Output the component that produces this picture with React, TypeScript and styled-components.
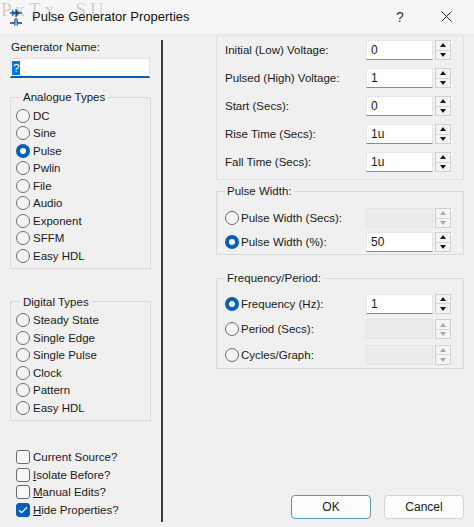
import React from 'react';
import styled, { createGlobalStyle, css } from 'styled-components';

const FONT = `"Liberation Sans", Arial, sans-serif`;
const ACCENT = '#005fb8';

const ANALOGUE = ['DC', 'Sine', 'Pulse', 'Pwlin', 'File', 'Audio', 'Exponent', 'SFFM', 'Easy HDL'];
const DIGITAL = ['Steady State', 'Single Edge', 'Single Pulse', 'Clock', 'Pattern', 'Easy HDL'];

const TIMING = [
  { label: 'Initial (Low) Voltage:', value: '0' },
  { label: 'Pulsed (High) Voltage:', value: '1' },
  { label: 'Start (Secs):', value: '0' },
  { label: 'Rise Time (Secs):', value: '1u' },
  { label: 'Fall Time (Secs):', value: '1u' },
];

const PULSE_WIDTH = [
  { label: 'Pulse Width (Secs):', value: '', checked: false },
  { label: 'Pulse Width (%):', value: '50', checked: true },
];

const FREQUENCY = [
  { label: 'Frequency (Hz):', value: '1', checked: true },
  { label: 'Period (Secs):', value: '', checked: false },
  { label: 'Cycles/Graph:', value: '', checked: false },
];

const AppIcon = () => (
  <svg width="14" height="18" viewBox="0 0 14 18">
    {/* diode on top */}
    <path d="M1 5h12" stroke="#1f3f6e" strokeWidth="1.4" />
    <path d="M3 1.5l4 3.5-4 3.5z" fill="#2a6cb8" />
    <path d="M7 1.5l4 3.5-4 3.5z" fill="#1f3f6e" />
    <path d="M7 1v8" stroke="#1f3f6e" strokeWidth="1.2" />
    {/* capacitor below */}
    <path d="M7 10v2M1 15h4M9 15h4" stroke="#1f3f6e" strokeWidth="1.4" />
    <rect x="5" y="11.5" width="1.6" height="6" fill="#2a6cb8" />
    <rect x="7.4" y="11.5" width="1.6" height="6" fill="#2a6cb8" />
  </svg>
);

const CloseGlyph = () => (
  <svg width="11" height="11" viewBox="0 0 11 11">
    <path d="M0.5 0.5l10 10M10.5 0.5l-10 10" stroke="#222" strokeWidth="1" />
  </svg>
);

const Spinner = ({ disabled }: { disabled?: boolean }) => (
  <SpinBox>
    <SpinHalf>
      <Arrow $up $disabled={disabled} />
    </SpinHalf>
    <SpinHalf $bottom>
      <Arrow $disabled={disabled} />
    </SpinHalf>
  </SpinBox>
);

const NumberField = ({ value, disabled }: { value: string; disabled?: boolean }) => (
  <FieldWrap>
    <TextBox $disabled={disabled}>{value}</TextBox>
    <Spinner disabled={disabled} />
  </FieldWrap>
);

const Radio = ({ checked }: { checked?: boolean }) => <RadioDot $checked={checked} />;

const App = (): React.JSX.Element => {
  return (
    <>
      <GlobalStyle />
      <Window>
        <Watermark>PкTx  SU</Watermark>
        <TitleBar>
          <AppIcon />
          <Title>Pulse Generator Properties</Title>
          <TitleButtons>
            <CaptionButton>?</CaptionButton>
            <CaptionButton>
              <CloseGlyph />
            </CaptionButton>
          </TitleButtons>
        </TitleBar>

        <Body>
          <LeftPane>
            <NameLabel>Generator Name:</NameLabel>
            <NameInput>
              <Selection>?</Selection>
            </NameInput>

            <GroupBox $top={12}>
              <Legend>Analogue Types</Legend>
              {ANALOGUE.map((name) => (
                <OptionRow key={name}>
                  <Radio checked={name === 'Pulse'} />
                  <span>{name}</span>
                </OptionRow>
              ))}
            </GroupBox>

            <GroupBox $top={26}>
              <Legend>Digital Types</Legend>
              {DIGITAL.map((name) => (
                <OptionRow key={name}>
                  <Radio />
                  <span>{name}</span>
                </OptionRow>
              ))}
            </GroupBox>

            <CheckList>
              <OptionRow>
                <CheckBox />
                <span>Current Source?</span>
              </OptionRow>
              <OptionRow>
                <CheckBox />
                <span>
                  <u>I</u>solate Before?
                </span>
              </OptionRow>
              <OptionRow>
                <CheckBox />
                <span>
                  <u>M</u>anual Edits?
                </span>
              </OptionRow>
              <OptionRow>
                <CheckBox $checked>
                  <svg width="10" height="8" viewBox="0 0 10 8">
                    <path d="M1 4.2l2.6 2.4L9 1.2" stroke="#fff" strokeWidth="1.3" fill="none" />
                  </svg>
                </CheckBox>
                <span>
                  <u>H</u>ide Properties?
                </span>
              </OptionRow>
            </CheckList>
          </LeftPane>

          <Divider />

          <RightPane>
            <Panel>
              {TIMING.map((row) => (
                <FieldRow key={row.label} $height={28}>
                  <FieldLabel $width={141}>{row.label}</FieldLabel>
                  <NumberField value={row.value} />
                </FieldRow>
              ))}
            </Panel>

            <RightGroup $top={4} $padTop={8} $padBottom={0}>
              <Legend>Pulse Width:</Legend>
              {PULSE_WIDTH.map((row) => (
                <FieldRow key={row.label} $height={24}>
                  <Radio checked={row.checked} />
                  <FieldLabel $width={127} $indent={2}>
                    {row.label}
                  </FieldLabel>
                  <NumberField value={row.value} disabled={!row.checked} />
                </FieldRow>
              ))}
            </RightGroup>

            <RightGroup $top={16} $padTop={6} $padBottom={0}>
              <Legend>Frequency/Period:</Legend>
              {FREQUENCY.map((row) => (
                <FieldRow key={row.label} $height={25.5}>
                  <Radio checked={row.checked} />
                  <FieldLabel $width={127} $indent={2}>
                    {row.label}
                  </FieldLabel>
                  <NumberField value={row.value} disabled={!row.checked} />
                </FieldRow>
              ))}
            </RightGroup>

            <ButtonRow>
              <DialogButton $default>OK</DialogButton>
              <DialogButton>Cancel</DialogButton>
            </ButtonRow>
          </RightPane>
        </Body>
      </Window>
    </>
  );
};

const GlobalStyle = createGlobalStyle`
  html, body {
    margin: 0;
    padding: 0;
    background: #f0f0f0;
  }
  #root {
    width: 474px;
    height: 527px;
  }
`;

const Window = styled.div`
  position: relative;
  width: 474px;
  height: 527px;
  display: flex;
  flex-direction: column;
  background: #f0f0f0;
  font-family: ${FONT};
  font-size: 11.5px;
  color: #1a1a1a;
  overflow: hidden;
`;

const Watermark = styled.div`
  position: absolute;
  top: 0;
  left: 1px;
  font-family: "Liberation Serif", serif;
  font-size: 19px;
  line-height: 19px;
  letter-spacing: 4px;
  white-space: pre;
  color: rgba(140, 140, 140, 0.4);
  pointer-events: none;
`;

const TitleBar = styled.div`
  height: 33px;
  flex-shrink: 0;
  display: flex;
  align-items: center;
  padding-left: 9px;
  background: #f7f7f7;
`;

const Title = styled.span`
  margin-left: 9px;
  font-size: 13px;
  color: #111;
`;

const TitleButtons = styled.div`
  margin-left: auto;
  display: flex;
  padding-right: 5px;
`;

const CaptionButton = styled.div`
  width: 46px;
  height: 33px;
  display: flex;
  align-items: center;
  justify-content: center;
  font-size: 14px;
  color: #333;
`;

const Body = styled.div`
  flex: 1;
  display: flex;
`;

const LeftPane = styled.div`
  width: 141px;
  padding-left: 10px;
  display: flex;
  flex-direction: column;
`;

const NameLabel = styled.div`
  margin-top: 7px;
  line-height: 14px;
  padding-left: 1px;
`;

const NameInput = styled.div`
  margin-top: 4px;
  width: 140px;
  height: 20px;
  box-sizing: border-box;
  background: #fff;
  border: 1px solid #e3e3e3;
  border-bottom: 2px solid ${ACCENT};
  display: flex;
  align-items: center;
  padding-left: 1px;
`;

const Selection = styled.span`
  background: #0078d7;
  color: #fff;
  line-height: 14px;
  padding: 0 1px;
`;

const GroupBox = styled.fieldset<{ $top: number }>`
  margin: ${(p) => p.$top}px 0 0;
  padding: 3px 0 3px 5px;
  border: 1px solid #dadada;
  min-width: 0;
`;

const Legend = styled.legend`
  padding: 0 2px;
  margin-left: 5px;
  line-height: 14px;
`;

const OptionRow = styled.div`
  height: 17.5px;
  display: flex;
  align-items: center;
  gap: 3px;
  white-space: nowrap;
`;

const RadioDot = styled.span<{ $checked?: boolean }>`
  width: 14px;
  height: 14px;
  box-sizing: border-box;
  border-radius: 50%;
  flex-shrink: 0;
  ${(p) =>
    p.$checked
      ? css`
          background: #fff;
          border: 4px solid ${ACCENT};
        `
      : css`
          background: #f5f5f5;
          border: 1px solid #6b6b6b;
        `}
`;

const CheckList = styled.div`
  margin-top: 28px;
  padding-left: 6px;
`;

const CheckBox = styled.span<{ $checked?: boolean }>`
  width: 14px;
  height: 14px;
  box-sizing: border-box;
  border-radius: 3px;
  flex-shrink: 0;
  display: flex;
  align-items: center;
  justify-content: center;
  background: ${(p) => (p.$checked ? ACCENT : '#f7f7f7')};
  border: 1px solid ${(p) => (p.$checked ? ACCENT : '#6b6b6b')};
`;

const Divider = styled.div`
  width: 2px;
  margin: 7px 0 5px 10px;
  background: #3d3d3d;
`;

const RightPane = styled.div`
  flex: 1;
  display: flex;
  flex-direction: column;
  padding: 0 10px 0 53px;
`;

const Panel = styled.div`
  margin-top: 2px;
  padding: 0 0 3px 8px;
  border: 1px solid #e2e2e2;
`;

const RightGroup = styled.fieldset<{ $top: number; $padTop: number; $padBottom: number }>`
  margin: ${(p) => p.$top}px 0 0;
  padding: ${(p) => p.$padTop}px 0 ${(p) => p.$padBottom}px 8px;
  border: 1px solid #dadada;
  min-width: 0;

  legend {
    margin-left: 0;
  }
`;

const FieldRow = styled.div<{ $height: number }>`
  height: ${(p) => p.$height}px;
  display: flex;
  align-items: center;
`;

const FieldLabel = styled.span<{ $width: number; $indent?: number }>`
  width: ${(p) => p.$width}px;
  padding-left: ${(p) => p.$indent ?? 0}px;
  box-sizing: border-box;
  white-space: nowrap;
  flex-shrink: 0;
`;

const FieldWrap = styled.div`
  display: flex;
  align-items: center;
  gap: 2px;
`;

const TextBox = styled.div<{ $disabled?: boolean }>`
  width: 67px;
  height: 20px;
  box-sizing: border-box;
  padding-left: 4px;
  display: flex;
  align-items: center;
  font-size: 12px;
  ${(p) =>
    p.$disabled
      ? css`
          background: #ececec;
          border: 1px solid #e4e4e4;
        `
      : css`
          background: #fff;
          border: 1px solid #e6e6e6;
          border-bottom-color: #8a8a8a;
        `}
`;

const SpinBox = styled.div`
  width: 16px;
  height: 20px;
  box-sizing: border-box;
  border: 1px solid #cfcfcf;
  background: #f4f4f4;
  display: flex;
  flex-direction: column;
`;

const SpinHalf = styled.div<{ $bottom?: boolean }>`
  flex: 1;
  display: flex;
  align-items: center;
  justify-content: center;
  ${(p) => p.$bottom && css`border-top: 1px solid #d6d6d6;`}
`;

const Arrow = styled.span<{ $up?: boolean; $disabled?: boolean }>`
  width: 0;
  height: 0;
  border-left: 3.5px solid transparent;
  border-right: 3.5px solid transparent;
  ${(p) =>
    p.$up
      ? css`border-bottom: 4px solid ${p.$disabled ? '#a8a8a8' : '#1a1a1a'};`
      : css`border-top: 4px solid ${p.$disabled ? '#a8a8a8' : '#1a1a1a'};`}
`;

const ButtonRow = styled.div`
  margin-top: auto;
  padding-bottom: 8px;
  display: flex;
  justify-content: flex-end;
  gap: 13px;
`;

const DialogButton = styled.div<{ $default?: boolean }>`
  width: 80px;
  height: 24px;
  box-sizing: border-box;
  border-radius: 4px;
  display: flex;
  align-items: center;
  justify-content: center;
  background: #fdfdfd;
  font-size: 12px;
  border: ${(p) => (p.$default ? '1.5px solid #5e95b5' : '1px solid #d2d2d2')};
`;

export default App;
